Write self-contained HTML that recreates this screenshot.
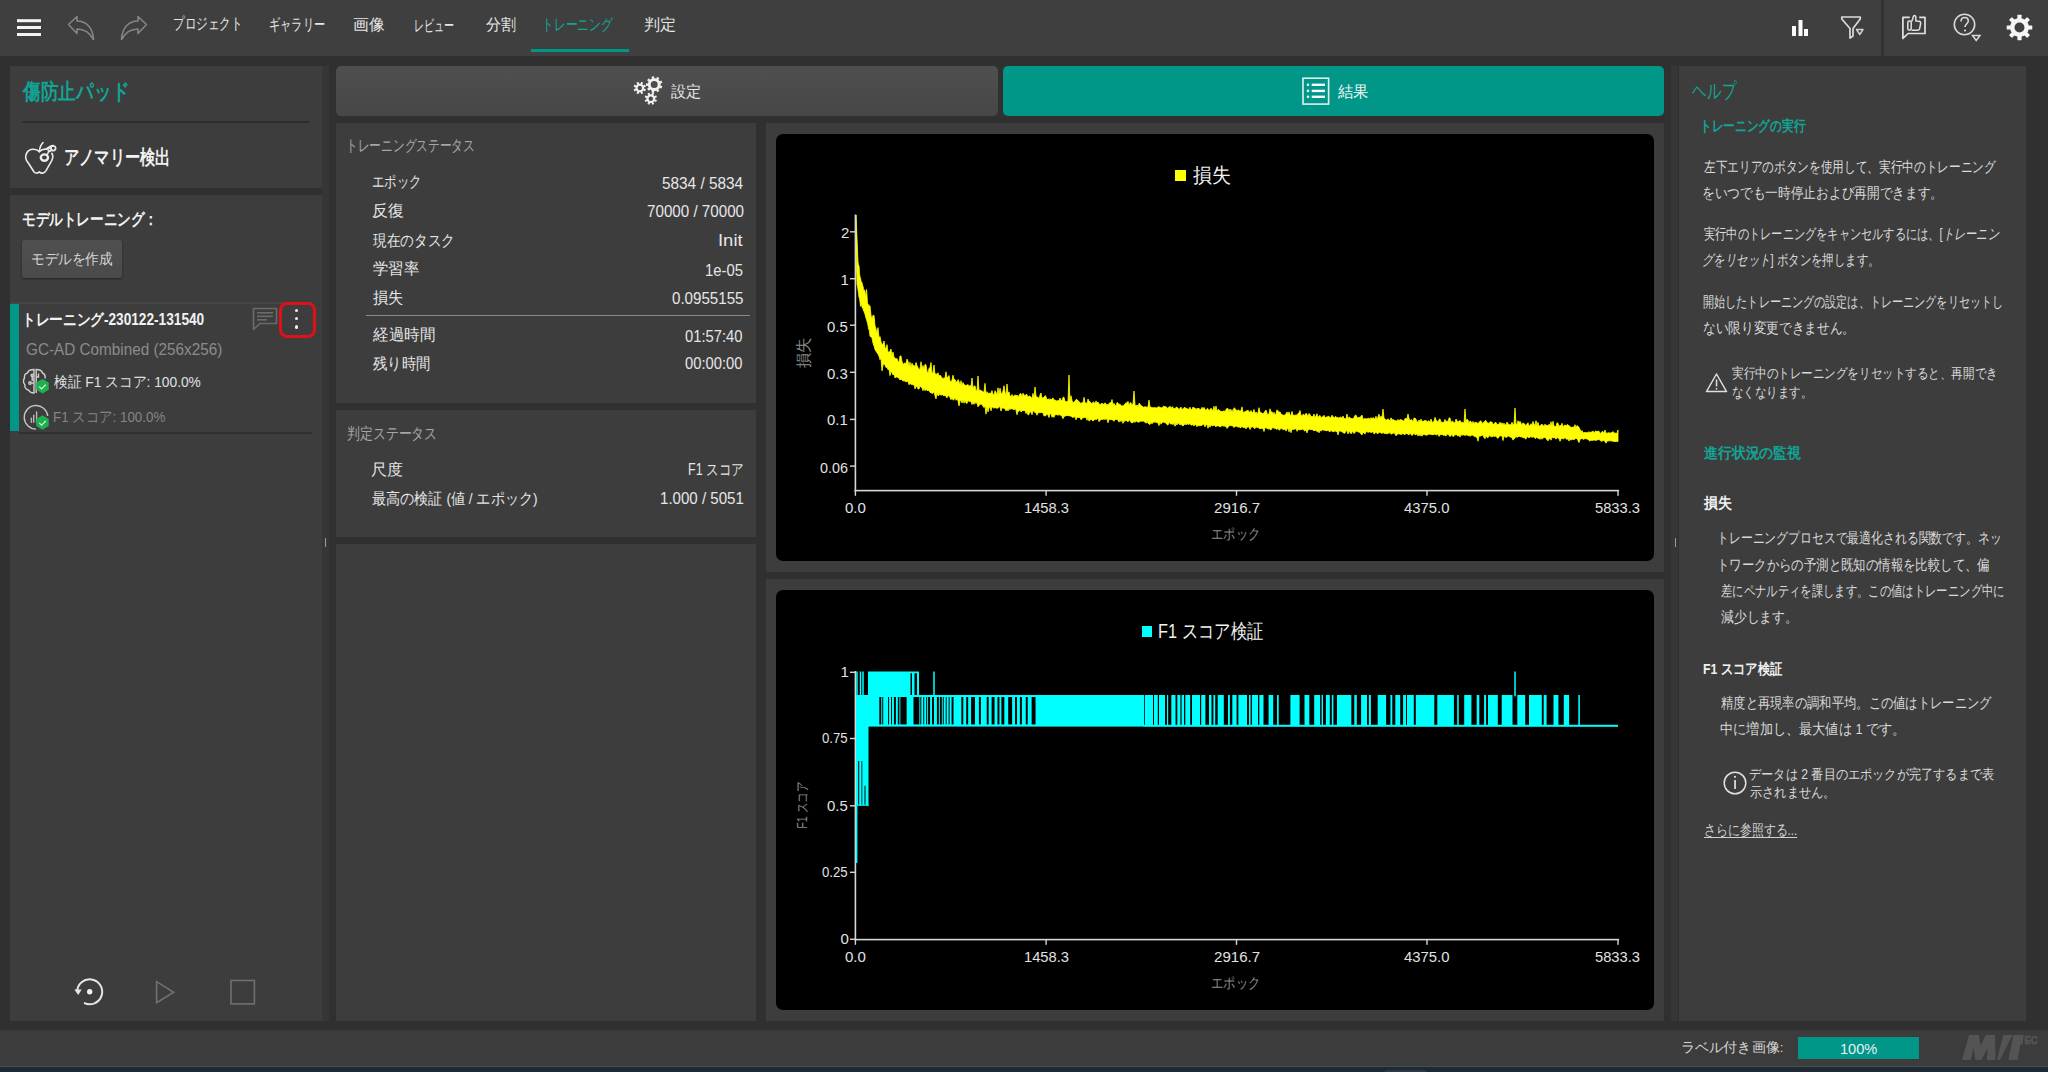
<!DOCTYPE html><html><head><meta charset="utf-8"><style>*{margin:0;padding:0}html,body{width:2048px;height:1072px;overflow:hidden}
body{background:#303030;font-family:"Liberation Sans",sans-serif;position:relative}
.tx{position:absolute;white-space:nowrap;transform-origin:0 50%}
</style></head><body>
<div style="position:absolute;left:0px;top:0px;width:2048px;height:56px;background:#3f3f3f;"></div>
<div style="position:absolute;left:1881px;top:0px;width:3px;height:56px;background:#313131;"></div>
<div style="position:absolute;left:322px;top:66px;width:7px;height:955px;background:#363636;"></div>
<div style="position:absolute;left:1670.8px;top:66px;width:7.7px;height:955px;background:#363636;"></div>
<div style="position:absolute;left:10px;top:66px;width:312px;height:122px;background:#3d3d3d;"></div>
<div style="position:absolute;left:22px;top:121px;width:287px;height:2px;background:#2e2e2e;"></div>
<div style="position:absolute;left:10px;top:195px;width:312px;height:826px;background:#3d3d3d;"></div>
<div style="position:absolute;left:22px;top:240px;width:100px;height:38px;background:linear-gradient(#505050,#4a4a4a);border-radius:3px;box-shadow:0 1px 2px rgba(0,0,0,0.45);"></div>
<div style="position:absolute;left:10px;top:301.5px;width:302px;height:2px;background:#464646;"></div>
<div style="position:absolute;left:10px;top:304px;width:9.2px;height:127px;background:#009688;"></div>
<div style="position:absolute;left:19px;top:431.5px;width:293px;height:2px;background:#2f2f2f;"></div>
<div style="position:absolute;left:278.5px;top:301.5px;width:37px;height:36.5px;background:transparent;border:3.6px solid #e0101a;border-radius:8px;box-sizing:border-box;"></div>
<div style="position:absolute;left:294.8px;top:308.7px;width:3.2px;height:3.2px;background:#f0f0f0;border-radius:50%;"></div>
<div style="position:absolute;left:294.8px;top:317.15px;width:3.2px;height:3.2px;background:#f0f0f0;border-radius:50%;"></div>
<div style="position:absolute;left:294.8px;top:325.4px;width:3.2px;height:3.2px;background:#f0f0f0;border-radius:50%;"></div>
<div style="position:absolute;left:336px;top:66px;width:662px;height:50px;background:linear-gradient(#4f4f4f,#474747);border-radius:5px;"></div>
<div style="position:absolute;left:1003px;top:66px;width:661px;height:50px;background:#009688;border-radius:5px;"></div>
<div style="position:absolute;left:336px;top:123px;width:420px;height:280px;background:#3d3d3d;"></div>
<div style="position:absolute;left:365.5px;top:314.5px;width:384px;height:1.3px;background:#8a8a8a;"></div>
<div style="position:absolute;left:336px;top:410px;width:420px;height:127px;background:#3d3d3d;"></div>
<div style="position:absolute;left:336px;top:544px;width:420px;height:477px;background:#3d3d3d;"></div>
<div style="position:absolute;left:766px;top:123px;width:898px;height:449px;background:#3d3d3d;"></div>
<div style="position:absolute;left:776.3px;top:134px;width:877.7px;height:427px;background:#000;border-radius:7px;"></div>
<div style="position:absolute;left:766px;top:579px;width:898px;height:442px;background:#3d3d3d;"></div>
<div style="position:absolute;left:776.3px;top:590px;width:877.7px;height:420px;background:#000;border-radius:7px;"></div>
<div style="position:absolute;left:1678.5px;top:66px;width:347.5px;height:955px;background:#3d3d3d;"></div>
<div style="position:absolute;left:324.5px;top:538px;width:1.5px;height:9px;background:#9a9a9a;"></div>
<div style="position:absolute;left:1674.5px;top:538px;width:1.5px;height:9px;background:#9a9a9a;"></div>
<div style="position:absolute;left:0px;top:1030px;width:2048px;height:36px;background:#3c3c3c;"></div>
<div style="position:absolute;left:0px;top:1066px;width:2048px;height:6px;background:#1f2933;"></div>
<div style="position:absolute;left:0px;top:1065.6px;width:2048px;height:1.2px;background:#454d55;"></div>
<div style="position:absolute;left:1384px;top:1070.3px;width:43px;height:6px;background:#2f3741;border-radius:3px;"></div>
<div style="position:absolute;left:1798.3px;top:1037.3px;width:120.3px;height:21.8px;background:#009688;"></div>
<div style="position:absolute;left:531px;top:48.5px;width:98px;height:3px;background:#009688;"></div>
<div style="position:absolute;left:1174.6px;top:170px;width:11.2px;height:11.2px;background:#ffff00;"></div>
<div style="position:absolute;left:1141.8px;top:626px;width:10.5px;height:10.5px;background:#00ffff;"></div>
<svg style="position:absolute;left:16px;top:18px" width="26" height="20" viewBox="0 0 26 20"><rect x="1" y="1.2" width="24" height="3" fill="#f4f4f4"/><rect x="1" y="8" width="24" height="3" fill="#f4f4f4"/><rect x="1" y="15" width="24" height="3" fill="#f4f4f4"/></svg>
<svg style="position:absolute;left:67px;top:15px" width="29" height="27" viewBox="0 0 29 27"><path d="M1.5,9.5 L10,1.5 L10,6 C19,6 26,12.5 26.5,24.5 C23,18 18,14 10,14 L10,18.5 Z" fill="none" stroke="#858585" stroke-width="1.6" stroke-linejoin="round"/></svg>
<svg style="position:absolute;left:119.5px;top:15px" width="29" height="27" viewBox="0 0 29 27"><g transform="translate(28,0) scale(-1,1)"><path d="M1.5,9.5 L10,1.5 L10,6 C19,6 26,12.5 26.5,24.5 C23,18 18,14 10,14 L10,18.5 Z" fill="none" stroke="#858585" stroke-width="1.6" stroke-linejoin="round"/></g></svg>
<svg style="position:absolute;left:1790px;top:18px" width="20" height="20" viewBox="0 0 20 20"><rect x="2" y="8" width="4" height="10" fill="#fafafa"/><rect x="8.5" y="2" width="4" height="16" fill="#fafafa"/><rect x="14" y="11" width="4" height="7" fill="#fafafa"/></svg>
<svg style="position:absolute;left:1839px;top:14px" width="27" height="27" viewBox="0 0 27 27"><path d="M2.8,3 L21.2,3 L21.2,5 L14,14.5 L14,22 L11,24 L11,14.5 L2.8,5 Z" fill="none" stroke="#dcdcdc" stroke-width="1.7" stroke-linejoin="round"/><path d="M17.5,15.5 L24,15.5 L20.8,20.5 Z" fill="none" stroke="#d0d0d0" stroke-width="1.5" stroke-linejoin="round"/></svg>
<svg style="position:absolute;left:1895px;top:8px" width="40" height="37" viewBox="0 0 40 37"><path d="M14.8,9.3 L7.9,9.3 L7.9,30.4 L13.1,25.5 L30,25.5 L30,9.3 L24.2,9.3" fill="none" stroke="#e2e2e2" stroke-width="1.7" stroke-linejoin="round"/><rect x="12.8" y="13.1" width="3.4" height="9" rx="1.5" fill="none" stroke="#e2e2e2" stroke-width="1.5"/><path d="M16.5,13.5 C17.5,12.5 18,10.5 18.3,8.5 C18.8,7 20.3,7 20.7,8.5 C21,10.5 20.8,12 20.8,13 L24.5,13.3 C26,13.8 25.8,15 25.5,16.5 L24.5,21 C24.2,22 23.5,22.2 22.5,22.2 L16.5,22.2" fill="none" stroke="#e2e2e2" stroke-width="1.5" stroke-linejoin="round"/></svg>
<svg style="position:absolute;left:1952px;top:12px" width="30" height="31" viewBox="0 0 30 31"><circle cx="12.5" cy="12.5" r="10.2" fill="none" stroke="#d8d8d8" stroke-width="1.6"/><path d="M9,9.5 C9,6.5 11,5.5 12.7,5.5 C14.8,5.5 16.3,7 16.3,9 C16.3,11.5 13,12 13,15" fill="none" stroke="#d8d8d8" stroke-width="1.6"/><circle cx="13" cy="18.5" r="1.1" fill="#d8d8d8"/><path d="M20.5,23.5 L28,23.5 L24.2,28.5 Z" fill="none" stroke="#d8d8d8" stroke-width="1.5"/></svg>
<svg style="position:absolute;left:2004px;top:11.6px" width="31" height="31" viewBox="0 0 31 31"><circle cx="15.5" cy="15.5" r="7.2" fill="none" stroke="#f6f6f6" stroke-width="4.4"/><rect x="13.4" y="2.7" width="4.2" height="6" rx="0.6" fill="#f6f6f6" transform="rotate(0 15.5 15.5)"/><rect x="13.4" y="2.7" width="4.2" height="6" rx="0.6" fill="#f6f6f6" transform="rotate(45 15.5 15.5)"/><rect x="13.4" y="2.7" width="4.2" height="6" rx="0.6" fill="#f6f6f6" transform="rotate(90 15.5 15.5)"/><rect x="13.4" y="2.7" width="4.2" height="6" rx="0.6" fill="#f6f6f6" transform="rotate(135 15.5 15.5)"/><rect x="13.4" y="2.7" width="4.2" height="6" rx="0.6" fill="#f6f6f6" transform="rotate(180 15.5 15.5)"/><rect x="13.4" y="2.7" width="4.2" height="6" rx="0.6" fill="#f6f6f6" transform="rotate(225 15.5 15.5)"/><rect x="13.4" y="2.7" width="4.2" height="6" rx="0.6" fill="#f6f6f6" transform="rotate(270 15.5 15.5)"/><rect x="13.4" y="2.7" width="4.2" height="6" rx="0.6" fill="#f6f6f6" transform="rotate(315 15.5 15.5)"/></svg>
<svg style="position:absolute;left:630px;top:74px" width="36" height="36" viewBox="0 0 36 36"><path d="M30.60,10.60 L30.52,11.60 L32.35,12.18 L31.46,14.62 L29.69,13.90 L29.10,14.71 L28.40,15.43 L29.42,17.05 L27.17,18.35 L26.28,16.65 L25.31,16.90 L24.31,17.00 L24.06,18.90 L21.50,18.45 L21.91,16.57 L21.00,16.14 L20.17,15.57 L18.75,16.86 L17.09,14.87 L18.60,13.70 L18.19,12.79 L17.92,11.82 L16.00,11.90 L16.00,9.30 L17.92,9.38 L18.19,8.41 L18.60,7.50 L17.09,6.33 L18.75,4.34 L20.17,5.63 L21.00,5.06 L21.91,4.63 L21.50,2.75 L24.06,2.30 L24.31,4.20 L25.31,4.30 L26.28,4.55 L27.17,2.85 L29.42,4.15 L28.40,5.77 L29.10,6.49 L29.69,7.30 L31.46,6.58 L32.35,9.02 L30.52,9.60 Z M20.70,10.60 a3.50,3.50 0 1,0 7.00,0 a3.50,3.50 0 1,0 -7.00,0 Z" fill="#f0f0f0" fill-rule="evenodd"/><path d="M14.20,14.00 L14.13,14.77 L15.95,15.35 L15.11,17.40 L13.41,16.52 L12.91,17.11 L12.32,17.61 L13.20,19.31 L11.15,20.15 L10.57,18.33 L9.80,18.40 L9.03,18.33 L8.45,20.15 L6.40,19.31 L7.28,17.61 L6.69,17.11 L6.19,16.52 L4.49,17.40 L3.65,15.35 L5.47,14.77 L5.40,14.00 L5.47,13.23 L3.65,12.65 L4.49,10.60 L6.19,11.48 L6.69,10.89 L7.28,10.39 L6.40,8.69 L8.45,7.85 L9.03,9.67 L9.80,9.60 L10.57,9.67 L11.15,7.85 L13.20,8.69 L12.32,10.39 L12.91,10.89 L13.41,11.48 L15.11,10.60 L15.95,12.65 L14.13,13.23 Z M7.60,14.00 a2.20,2.20 0 1,0 4.40,0 a2.20,2.20 0 1,0 -4.40,0 Z" fill="#f0f0f0" fill-rule="evenodd"/><path d="M25.20,24.70 L25.13,25.47 L26.95,26.05 L26.11,28.10 L24.41,27.22 L23.91,27.81 L23.32,28.31 L24.20,30.01 L22.15,30.85 L21.57,29.03 L20.80,29.10 L20.03,29.03 L19.45,30.85 L17.40,30.01 L18.28,28.31 L17.69,27.81 L17.19,27.22 L15.49,28.10 L14.65,26.05 L16.47,25.47 L16.40,24.70 L16.47,23.93 L14.65,23.35 L15.49,21.30 L17.19,22.18 L17.69,21.59 L18.28,21.09 L17.40,19.39 L19.45,18.55 L20.03,20.37 L20.80,20.30 L21.57,20.37 L22.15,18.55 L24.20,19.39 L23.32,21.09 L23.91,21.59 L24.41,22.18 L26.11,21.30 L26.95,23.35 L25.13,23.93 Z M18.60,24.70 a2.20,2.20 0 1,0 4.40,0 a2.20,2.20 0 1,0 -4.40,0 Z" fill="#f0f0f0" fill-rule="evenodd"/></svg>
<svg style="position:absolute;left:1300px;top:75px" width="31" height="31" viewBox="0 0 31 31"><rect x="3" y="3.2" width="25.6" height="25.9" fill="none" stroke="#e2efed" stroke-width="1.6"/><circle cx="8" cy="9.8" r="1.3" fill="#f4fafa"/><circle cx="8" cy="15.9" r="1.3" fill="#f4fafa"/><circle cx="8" cy="21.8" r="1.3" fill="#f4fafa"/><rect x="11.7" y="8.6" width="13.3" height="2.4" fill="#f4fafa"/><rect x="11.7" y="14.7" width="13.3" height="2.4" fill="#f4fafa"/><rect x="11.7" y="20.6" width="13.3" height="2.4" fill="#f4fafa"/></svg>
<svg style="position:absolute;left:22px;top:139px" width="38" height="38" viewBox="0 0 38 38"><g fill="none" stroke="#ececec" stroke-linecap="round" stroke-linejoin="round"><path d="M17.3,12.6 C15,10 8,8.5 5,13.5 C3,17 3.5,21 6.3,24 L11.6,32.3 C12.8,34.3 15.5,34.8 17.3,32.9 C19,34.8 22.3,34.5 23.9,31.9 L29.7,21.6 C31,19 31.3,16.5 29.8,14.3" stroke-width="1.6"/><path d="M17.3,12.6 C19,11 21.5,10 24,10.2" stroke-width="1.6"/><path d="M17.3,12.4 C17.8,8.5 19,5.5 21,3.6" stroke-width="1.5"/><ellipse cx="22.4" cy="18.6" rx="3.6" ry="3.2" stroke-width="2.4"/><path d="M25,16 L27.3,11.5 M24,10.2 C26,8.5 28.5,6.5 31.5,6.6" stroke-width="1.6"/><circle cx="31.3" cy="9.3" r="2.3" stroke-width="1.7"/><circle cx="27.6" cy="10.8" r="1.7" stroke-width="1.5"/></g></svg>
<svg style="position:absolute;left:252px;top:307px" width="27" height="25" viewBox="0 0 27 25"><path d="M1.5,1.5 L24.5,1.5 L24.5,16.5 L8,16.5 L1.5,22.5 Z" fill="none" stroke="#6b6b6b" stroke-width="1.6" stroke-linejoin="round"/><rect x="5" y="5" width="16" height="1.6" fill="#6b6b6b"/><rect x="5" y="8.5" width="16" height="1.6" fill="#6b6b6b"/><rect x="5" y="12" width="10" height="1.6" fill="#6b6b6b"/></svg>
<svg style="position:absolute;left:22px;top:368px" width="30" height="28" viewBox="0 0 30 28"><g fill="none" stroke="#cfcfcf" stroke-width="1.4"><path d="M12,1.5 C8,1.5 6,3 5.5,5 C3,5.5 2,8 2.5,10 C1,12 1.2,15 2.8,16.5 C2.5,19 4,21.5 6.5,22 C7.5,24 10,25 12,25 Z"/><path d="M14.2,25 L14.2,1.5 C18,1.5 20,3 20.5,5 C22.5,5.8 23.5,8 23,10.5"/><path d="M10.2,8.6 L10.2,12 L12,12 M9.2,15 L12,15"/><circle cx="10.2" cy="7.4" r="1.1"/><circle cx="8" cy="15" r="1.2"/><path d="M14.2,9 L16.5,9 L16.5,5.5"/></g><path d="M26.74,21.80 L20.50,25.40 L14.26,21.80 L14.26,14.60 L20.50,11.00 L26.74,14.60 Z" fill="#1db04f"/><path d="M17.2,18.6 L19.6,20.9 L23.8,16.6" fill="none" stroke="#d6f3dc" stroke-width="1.3"/></svg>
<svg style="position:absolute;left:22px;top:404px" width="30" height="28" viewBox="0 0 30 28"><path d="M14,25.1 A11.8,11.8 0 1,1 25.75,12" fill="none" stroke="#c4c4c4" stroke-width="1.4"/><rect x="8.7" y="13.6" width="1.4" height="5.2" fill="#b8b8b8"/><rect x="11" y="10.8" width="1.4" height="8" fill="#b8b8b8"/><rect x="13.9" y="7.4" width="1.4" height="11.4" fill="#b8b8b8"/><path d="M26.74,22.10 L20.50,25.70 L14.26,22.10 L14.26,14.90 L20.50,11.30 L26.74,14.90 Z" fill="#1db04f"/><path d="M17.2,18.9 L19.6,21.2 L23.8,16.9" fill="none" stroke="#d6f3dc" stroke-width="1.3"/></svg>
<svg style="position:absolute;left:72px;top:975px" width="36" height="34" viewBox="0 0 36 34"><path d="M12.03,27.94 A12.5,12.5 0 1,0 5.2,16.8" fill="none" stroke="#e6e6e6" stroke-width="2"/><path d="M2.3,14.4 L9.7,14.4 L6.2,19.9 Z" fill="#e6e6e6"/><circle cx="17.7" cy="16.8" r="2.7" fill="#f0f0f0"/></svg>
<svg style="position:absolute;left:153px;top:978px" width="26" height="28" viewBox="0 0 26 28"><path d="M3.6,3.6 L20.6,14.2 L3.6,24.8 Z" fill="none" stroke="#707070" stroke-width="1.6" stroke-linejoin="miter"/></svg>
<svg style="position:absolute;left:228px;top:977px" width="29" height="29" viewBox="0 0 29 29"><rect x="3" y="3.5" width="23.4" height="23.4" fill="none" stroke="#707070" stroke-width="1.6"/></svg>
<svg style="position:absolute;left:1705px;top:372px" width="25" height="22" viewBox="0 0 25 22"><path d="M11.5,2 L21.5,19.5 L1.5,19.5 Z" fill="none" stroke="#e0e0e0" stroke-width="1.5" stroke-linejoin="round"/><rect x="10.8" y="7.5" width="1.5" height="7" fill="#e0e0e0"/><circle cx="11.5" cy="16.8" r="0.9" fill="#e0e0e0"/></svg>
<svg style="position:absolute;left:1722px;top:769px" width="27" height="28" viewBox="0 0 27 28"><circle cx="13" cy="14" r="10.8" fill="none" stroke="#e0e0e0" stroke-width="1.5"/><rect x="12.2" y="11" width="1.7" height="9" fill="#e0e0e0"/><circle cx="13" cy="7.8" r="1.1" fill="#e0e0e0"/></svg>
<svg style="position:absolute;left:1960px;top:1033px" width="82" height="30" viewBox="0 0 82 30"><path d="M2.03,26.9 L9.06,2.05 L18.9,2.05 L20.5,12.8 L25.76,2.05 L35,2.05 L35.4,26.9 L26.85,26.9 L27.7,15.2 L21.4,26.9 L15.4,26.9 L13.45,14.6 L10.8,26.9 Z" fill="#545454"/><path d="M37,26.9 L43.3,2.05 L52.6,2.05 L39.8,26.9 Z" fill="#545454"/><path d="M53.4,2.05 L63.6,2.05 L62.6,11.5 L60.5,11.5 L57.4,26.9 L48.2,26.9 Z" fill="#545454"/><text x="64.6" y="10.6" font-family="Liberation Sans" font-weight="700" font-size="11" fill="#545454" stroke="#545454" stroke-width="0.7" transform="translate(64.6,0) scale(0.85,1) translate(-64.6,0)">EC</text></svg>
<svg style="position:absolute;left:0;top:0" width="2048" height="1072"><path d="M856.0,215.0 L856.5,226.5 L857.0,238.0 L857.5,250.0 L858.0,262.0 L858.5,265.5 L859.0,265.6 L859.5,273.2 L860.0,277.0 L860.5,277.8 L861.0,281.0 L861.5,282.4 L862.0,282.4 L862.5,285.2 L863.0,286.1 L863.5,289.3 L864.0,290.8 L864.5,289.8 L865.0,291.6 L865.5,295.0 L866.0,296.1 L866.5,289.5 L867.0,295.6 L867.5,302.9 L868.0,304.2 L868.5,306.7 L869.0,304.7 L869.5,308.6 L870.0,306.0 L871.0,315.2 L872.0,319.0 L873.0,315.3 L874.0,315.3 L875.0,325.5 L876.0,328.8 L877.0,333.5 L878.0,327.6 L879.0,337.5 L880.0,336.5 L881.0,341.7 L882.0,344.4 L883.0,344.4 L884.0,341.0 L885.0,347.2 L886.0,349.1 L887.0,344.6 L888.0,351.9 L889.0,352.3 L890.0,351.2 L891.0,349.0 L892.0,355.7 L893.0,352.0 L894.0,357.6 L895.0,357.9 L896.0,359.3 L897.0,358.4 L898.0,361.2 L899.0,362.4 L900.0,356.0 L901.0,355.9 L902.0,361.6 L903.0,364.5 L904.0,363.3 L905.0,363.2 L906.0,363.4 L907.0,359.1 L908.0,361.1 L909.0,366.5 L910.0,362.2 L911.0,367.8 L912.0,363.2 L913.0,365.7 L914.0,365.1 L915.0,367.2 L916.0,362.5 L917.0,365.6 L918.0,367.6 L919.0,369.7 L920.0,368.8 L921.0,361.7 L922.0,368.2 L923.0,365.5 L924.0,369.6 L925.0,364.3 L926.0,364.9 L927.0,371.2 L928.0,373.7 L929.0,368.3 L930.0,367.8 L931.0,362.5 L932.0,373.1 L933.0,372.9 L934.0,365.0 L935.0,374.5 L936.0,373.4 L937.0,375.0 L938.0,372.7 L939.0,376.1 L940.0,375.1 L941.0,376.3 L942.0,377.9 L943.0,378.4 L944.0,378.2 L945.0,378.0 L946.0,371.8 L947.0,377.9 L948.0,377.2 L949.0,375.5 L950.0,380.8 L951.0,381.9 L952.0,380.1 L953.0,375.2 L954.0,379.4 L955.0,379.6 L956.0,381.8 L957.0,382.2 L958.0,379.6 L959.0,381.4 L960.0,385.1 L961.0,380.7 L962.0,385.3 L963.0,382.5 L964.0,384.4 L965.0,385.3 L966.0,385.4 L967.0,385.3 L968.0,384.4 L969.0,386.7 L970.0,385.2 L971.0,386.6 L972.0,378.0 L973.0,388.1 L974.0,386.3 L975.0,385.8 L976.0,390.2 L977.0,391.1 L978.0,376.0 L979.0,391.1 L980.0,389.7 L981.0,391.2 L982.0,390.7 L983.0,392.2 L984.0,391.9 L985.0,383.3 L986.0,394.0 L987.0,391.7 L988.0,393.7 L989.0,393.1 L990.0,393.3 L991.0,393.3 L992.0,390.6 L993.0,394.6 L994.0,394.9 L995.0,390.7 L996.0,392.4 L997.0,394.7 L998.0,387.8 L999.0,394.6 L1000.0,388.2 L1001.0,392.7 L1002.0,394.3 L1003.0,391.0 L1004.0,385.7 L1005.0,392.0 L1006.0,396.0 L1007.0,384.0 L1008.0,393.2 L1009.0,391.9 L1010.0,396.3 L1011.0,396.4 L1012.0,394.5 L1013.0,396.7 L1014.0,396.0 L1015.0,394.8 L1016.0,396.1 L1017.0,395.0 L1018.0,396.7 L1019.0,395.5 L1020.0,393.7 L1021.0,393.7 L1022.0,396.7 L1023.0,393.2 L1024.0,394.7 L1025.0,396.4 L1026.0,394.4 L1027.0,394.7 L1028.0,397.2 L1029.0,396.1 L1030.0,396.3 L1031.0,397.2 L1032.0,398.3 L1033.0,393.4 L1034.0,398.2 L1035.0,387.0 L1036.0,395.7 L1037.0,397.5 L1038.0,397.1 L1039.0,399.1 L1040.0,395.1 L1041.0,393.0 L1042.0,398.5 L1043.0,397.6 L1044.0,397.5 L1045.0,395.6 L1046.0,396.4 L1047.0,400.1 L1048.0,398.8 L1049.0,399.7 L1050.0,398.7 L1051.0,400.1 L1052.0,398.7 L1053.0,398.0 L1054.0,400.1 L1055.0,400.0 L1056.0,400.7 L1057.0,401.1 L1058.0,400.6 L1059.0,400.7 L1060.0,398.0 L1061.0,400.2 L1062.0,400.7 L1063.0,397.4 L1064.0,397.2 L1065.0,401.1 L1066.0,401.9 L1067.0,401.5 L1068.0,401.2 L1069.0,375.0 L1070.0,401.2 L1071.0,395.7 L1072.0,400.4 L1073.0,402.5 L1074.0,402.3 L1075.0,401.0 L1076.0,399.6 L1077.0,399.5 L1078.0,400.6 L1079.0,401.6 L1080.0,403.1 L1081.0,403.2 L1082.0,402.7 L1083.0,402.9 L1084.0,397.3 L1085.0,403.1 L1086.0,402.8 L1087.0,403.5 L1088.0,399.0 L1089.0,401.2 L1090.0,401.8 L1091.0,402.7 L1092.0,404.1 L1093.0,401.8 L1094.0,402.7 L1095.0,403.2 L1096.0,400.9 L1097.0,403.2 L1098.0,402.0 L1099.0,403.5 L1100.0,404.7 L1101.0,403.7 L1102.0,403.3 L1103.0,404.0 L1104.0,404.4 L1105.0,402.8 L1106.0,404.1 L1107.0,404.7 L1108.0,404.8 L1109.0,403.6 L1110.0,402.4 L1111.0,403.1 L1112.0,399.5 L1113.0,404.7 L1114.0,403.3 L1115.0,405.5 L1116.0,405.7 L1117.0,402.6 L1118.0,403.0 L1119.0,404.6 L1120.0,404.0 L1121.0,405.8 L1122.0,405.9 L1123.0,406.0 L1124.0,404.9 L1125.0,404.2 L1126.0,402.6 L1127.0,403.5 L1128.0,401.3 L1129.0,405.6 L1130.0,402.9 L1131.0,402.7 L1132.0,405.2 L1133.0,403.8 L1134.0,391.0 L1135.0,404.5 L1136.0,406.3 L1137.0,404.9 L1138.0,406.7 L1139.0,403.3 L1140.0,404.1 L1141.0,406.0 L1142.0,405.8 L1143.0,407.3 L1144.0,407.1 L1145.0,406.8 L1146.0,406.9 L1147.0,407.2 L1148.0,407.1 L1149.0,400.1 L1150.0,407.5 L1151.0,406.8 L1152.0,407.9 L1153.0,407.5 L1154.0,408.1 L1155.0,407.3 L1156.0,408.2 L1157.0,407.7 L1158.0,407.3 L1159.0,406.4 L1160.0,407.6 L1161.0,407.7 L1162.0,408.0 L1163.0,406.7 L1164.0,405.9 L1165.0,407.2 L1166.0,406.5 L1167.0,408.5 L1168.0,407.8 L1169.0,407.4 L1170.0,406.1 L1171.0,409.2 L1172.0,406.7 L1173.0,407.4 L1174.0,408.8 L1175.0,408.5 L1176.0,407.3 L1177.0,407.2 L1178.0,408.3 L1179.0,409.6 L1180.0,408.2 L1181.0,407.1 L1182.0,409.3 L1183.0,409.2 L1184.0,407.6 L1185.0,407.5 L1186.0,408.4 L1187.0,408.6 L1188.0,409.3 L1189.0,409.2 L1190.0,407.2 L1191.0,409.7 L1192.0,409.5 L1193.0,407.0 L1194.0,408.2 L1195.0,407.9 L1196.0,409.8 L1197.0,408.3 L1198.0,408.8 L1199.0,408.2 L1200.0,410.1 L1201.0,409.2 L1202.0,407.3 L1203.0,408.8 L1204.0,407.4 L1205.0,409.3 L1206.0,410.6 L1207.0,408.7 L1208.0,408.7 L1209.0,411.1 L1210.0,409.5 L1211.0,408.2 L1212.0,409.4 L1213.0,410.8 L1214.0,406.3 L1215.0,411.0 L1216.0,406.0 L1217.0,411.3 L1218.0,409.6 L1219.0,409.7 L1220.0,411.2 L1221.0,411.1 L1222.0,412.0 L1223.0,411.2 L1224.0,410.9 L1225.0,411.5 L1226.0,409.4 L1227.0,408.5 L1228.0,408.6 L1229.0,411.8 L1230.0,409.0 L1231.0,411.9 L1232.0,409.6 L1233.0,412.6 L1234.0,407.8 L1235.0,408.4 L1236.0,409.7 L1237.0,411.5 L1238.0,409.8 L1239.0,410.4 L1240.0,411.3 L1241.0,410.6 L1242.0,406.9 L1243.0,412.5 L1244.0,412.1 L1245.0,412.0 L1246.0,410.7 L1247.0,411.3 L1248.0,410.0 L1249.0,412.3 L1250.0,412.0 L1251.0,410.5 L1252.0,412.6 L1253.0,412.6 L1254.0,409.4 L1255.0,413.8 L1256.0,411.9 L1257.0,413.7 L1258.0,412.4 L1259.0,407.7 L1260.0,412.0 L1261.0,412.9 L1262.0,412.9 L1263.0,414.1 L1264.0,412.4 L1265.0,411.5 L1266.0,410.0 L1267.0,413.1 L1268.0,414.7 L1269.0,413.9 L1270.0,408.8 L1271.0,412.4 L1272.0,411.6 L1273.0,414.4 L1274.0,412.3 L1275.0,415.1 L1276.0,413.6 L1277.0,409.8 L1278.0,410.9 L1279.0,412.6 L1280.0,411.7 L1281.0,413.8 L1282.0,414.8 L1283.0,415.0 L1284.0,415.5 L1285.0,414.8 L1286.0,414.0 L1287.0,411.9 L1288.0,414.3 L1289.0,411.9 L1290.0,414.6 L1291.0,415.8 L1292.0,411.4 L1293.0,415.3 L1294.0,415.2 L1295.0,415.5 L1296.0,414.7 L1297.0,415.4 L1298.0,413.5 L1299.0,413.1 L1300.0,410.5 L1301.0,415.5 L1302.0,415.9 L1303.0,414.3 L1304.0,414.5 L1305.0,415.5 L1306.0,413.1 L1307.0,414.5 L1308.0,416.8 L1309.0,413.4 L1310.0,414.4 L1311.0,416.9 L1312.0,416.2 L1313.0,417.1 L1314.0,414.0 L1315.0,417.4 L1316.0,415.8 L1317.0,413.7 L1318.0,417.4 L1319.0,416.1 L1320.0,415.4 L1321.0,417.7 L1322.0,417.0 L1323.0,416.7 L1324.0,415.3 L1325.0,417.5 L1326.0,417.3 L1327.0,417.0 L1328.0,416.5 L1329.0,416.2 L1330.0,418.0 L1331.0,417.5 L1332.0,415.2 L1333.0,416.4 L1334.0,417.9 L1335.0,416.8 L1336.0,416.6 L1337.0,417.7 L1338.0,417.4 L1339.0,418.3 L1340.0,416.9 L1341.0,417.7 L1342.0,417.9 L1343.0,416.0 L1344.0,418.8 L1345.0,418.4 L1346.0,419.0 L1347.0,414.0 L1348.0,418.4 L1349.0,417.2 L1350.0,417.4 L1351.0,418.5 L1352.0,418.8 L1353.0,418.8 L1354.0,417.4 L1355.0,415.4 L1356.0,415.1 L1357.0,417.2 L1358.0,418.2 L1359.0,416.9 L1360.0,418.3 L1361.0,416.0 L1362.0,415.1 L1363.0,419.4 L1364.0,418.8 L1365.0,418.6 L1366.0,419.0 L1367.0,418.7 L1368.0,418.6 L1369.0,418.1 L1370.0,420.1 L1371.0,417.6 L1372.0,418.7 L1373.0,417.6 L1374.0,418.4 L1375.0,419.2 L1376.0,416.3 L1377.0,420.0 L1378.0,416.9 L1379.0,414.2 L1380.0,418.4 L1381.0,416.1 L1382.0,417.6 L1383.0,409.0 L1384.0,418.2 L1385.0,419.1 L1386.0,419.9 L1387.0,420.1 L1388.0,418.7 L1389.0,420.0 L1390.0,420.9 L1391.0,417.8 L1392.0,419.5 L1393.0,420.0 L1394.0,419.7 L1395.0,420.8 L1396.0,420.8 L1397.0,421.1 L1398.0,419.5 L1399.0,421.0 L1400.0,419.6 L1401.0,420.0 L1402.0,419.8 L1403.0,420.9 L1404.0,421.0 L1405.0,418.5 L1406.0,418.5 L1407.0,419.0 L1408.0,414.0 L1409.0,418.3 L1410.0,421.1 L1411.0,419.5 L1412.0,420.1 L1413.0,421.7 L1414.0,418.0 L1415.0,418.1 L1416.0,419.2 L1417.0,421.9 L1418.0,421.9 L1419.0,420.0 L1420.0,421.8 L1421.0,419.2 L1422.0,421.2 L1423.0,421.6 L1424.0,420.6 L1425.0,420.9 L1426.0,420.2 L1427.0,422.2 L1428.0,421.3 L1429.0,420.7 L1430.0,422.3 L1431.0,419.1 L1432.0,422.0 L1433.0,422.3 L1434.0,421.2 L1435.0,417.3 L1436.0,419.9 L1437.0,420.9 L1438.0,422.5 L1439.0,419.5 L1440.0,418.9 L1441.0,422.5 L1442.0,421.8 L1443.0,422.8 L1444.0,422.1 L1445.0,419.4 L1446.0,421.7 L1447.0,420.7 L1448.0,422.4 L1449.0,418.0 L1450.0,417.8 L1451.0,422.7 L1452.0,421.2 L1453.0,421.4 L1454.0,422.7 L1455.0,423.1 L1456.0,419.1 L1457.0,420.7 L1458.0,422.2 L1459.0,421.3 L1460.0,420.3 L1461.0,422.8 L1462.0,421.8 L1463.0,422.9 L1464.0,422.8 L1465.0,409.0 L1466.0,422.4 L1467.0,419.1 L1468.0,420.1 L1469.0,423.8 L1470.0,420.9 L1471.0,421.5 L1472.0,423.9 L1473.0,421.4 L1474.0,423.5 L1475.0,422.3 L1476.0,422.5 L1477.0,422.6 L1478.0,423.8 L1479.0,422.2 L1480.0,421.6 L1481.0,420.7 L1482.0,423.4 L1483.0,422.9 L1484.0,421.9 L1485.0,421.0 L1486.0,420.5 L1487.0,423.3 L1488.0,422.5 L1489.0,424.0 L1490.0,421.7 L1491.0,422.1 L1492.0,422.1 L1493.0,424.2 L1494.0,424.6 L1495.0,422.6 L1496.0,422.4 L1497.0,424.5 L1498.0,424.3 L1499.0,424.3 L1500.0,422.2 L1501.0,424.5 L1502.0,422.8 L1503.0,425.0 L1504.0,423.1 L1505.0,424.9 L1506.0,424.9 L1507.0,422.1 L1508.0,423.5 L1509.0,424.9 L1510.0,424.4 L1511.0,425.1 L1512.0,422.3 L1513.0,425.0 L1514.0,424.1 L1515.0,408.0 L1516.0,424.4 L1517.0,424.5 L1518.0,420.7 L1519.0,423.1 L1520.0,421.3 L1521.0,423.3 L1522.0,424.9 L1523.0,422.8 L1524.0,423.8 L1525.0,424.4 L1526.0,425.7 L1527.0,423.9 L1528.0,422.7 L1529.0,425.9 L1530.0,425.5 L1531.0,423.7 L1532.0,425.5 L1533.0,421.4 L1534.0,424.0 L1535.0,425.7 L1536.0,420.7 L1537.0,426.0 L1538.0,422.3 L1539.0,426.5 L1540.0,425.6 L1541.0,425.2 L1542.0,424.0 L1543.0,426.0 L1544.0,425.8 L1545.0,424.2 L1546.0,425.4 L1547.0,425.2 L1548.0,425.9 L1549.0,424.2 L1550.0,425.4 L1551.0,421.7 L1552.0,426.8 L1553.0,421.2 L1554.0,426.4 L1555.0,426.0 L1556.0,427.0 L1557.0,422.7 L1558.0,423.2 L1559.0,426.4 L1560.0,425.2 L1561.0,425.9 L1562.0,423.3 L1563.0,426.6 L1564.0,425.9 L1565.0,424.8 L1566.0,426.1 L1567.0,424.7 L1568.0,424.7 L1569.0,426.0 L1570.0,426.3 L1571.0,427.5 L1572.0,427.3 L1573.0,427.0 L1574.0,427.4 L1575.0,424.7 L1576.0,427.7 L1577.0,425.5 L1578.0,426.3 L1579.0,427.3 L1580.0,429.4 L1581.0,431.7 L1582.0,430.5 L1583.0,432.6 L1584.0,433.0 L1585.0,432.2 L1586.0,432.9 L1587.0,432.4 L1588.0,432.8 L1589.0,431.6 L1590.0,432.8 L1591.0,432.0 L1592.0,432.0 L1593.0,430.9 L1594.0,433.1 L1595.0,431.5 L1596.0,430.8 L1597.0,432.1 L1598.0,431.0 L1599.0,431.2 L1600.0,433.2 L1601.0,433.3 L1602.0,431.6 L1603.0,431.5 L1604.0,433.2 L1605.0,430.0 L1606.0,433.0 L1607.0,433.5 L1608.0,432.8 L1609.0,432.8 L1610.0,433.2 L1611.0,432.7 L1612.0,432.8 L1613.0,431.6 L1614.0,432.6 L1615.0,433.6 L1616.0,432.8 L1617.0,433.7 L1618.0,429.9 L1618.0,441.6 L1617.0,441.2 L1616.0,441.4 L1615.0,441.5 L1614.0,441.4 L1613.0,441.2 L1612.0,441.0 L1611.0,440.7 L1610.0,441.0 L1609.0,440.6 L1608.0,441.2 L1607.0,440.9 L1606.0,443.2 L1605.0,441.7 L1604.0,440.0 L1603.0,441.1 L1602.0,440.6 L1601.0,441.4 L1600.0,439.8 L1599.0,439.7 L1598.0,439.8 L1597.0,439.7 L1596.0,440.8 L1595.0,440.0 L1594.0,440.1 L1593.0,440.2 L1592.0,440.5 L1591.0,440.1 L1590.0,441.2 L1589.0,440.3 L1588.0,439.4 L1587.0,438.9 L1586.0,438.7 L1585.0,438.6 L1584.0,439.0 L1583.0,439.4 L1582.0,438.4 L1581.0,438.7 L1580.0,439.7 L1579.0,442.6 L1578.0,440.6 L1577.0,438.3 L1576.0,438.8 L1575.0,438.3 L1574.0,440.0 L1573.0,439.1 L1572.0,439.4 L1571.0,440.0 L1570.0,439.3 L1569.0,441.1 L1568.0,438.4 L1567.0,439.7 L1566.0,438.6 L1565.0,437.7 L1564.0,438.6 L1563.0,439.1 L1562.0,437.9 L1561.0,439.1 L1560.0,441.3 L1559.0,438.5 L1558.0,438.1 L1557.0,437.4 L1556.0,439.2 L1555.0,437.7 L1554.0,437.8 L1553.0,437.5 L1552.0,437.6 L1551.0,440.2 L1550.0,437.9 L1549.0,439.2 L1548.0,440.8 L1547.0,439.9 L1546.0,438.0 L1545.0,437.6 L1544.0,437.5 L1543.0,438.1 L1542.0,439.3 L1541.0,436.9 L1540.0,439.4 L1539.0,438.0 L1538.0,438.6 L1537.0,437.1 L1536.0,438.3 L1535.0,438.3 L1534.0,436.8 L1533.0,437.1 L1532.0,437.2 L1531.0,436.6 L1530.0,437.2 L1529.0,438.0 L1528.0,436.8 L1527.0,436.7 L1526.0,439.1 L1525.0,438.6 L1524.0,437.4 L1523.0,437.9 L1522.0,436.8 L1521.0,437.0 L1520.0,436.5 L1519.0,436.2 L1518.0,436.7 L1517.0,437.4 L1516.0,436.6 L1515.0,437.9 L1514.0,439.0 L1513.0,440.1 L1512.0,437.9 L1511.0,437.0 L1510.0,437.1 L1509.0,436.3 L1508.0,435.9 L1507.0,436.8 L1506.0,437.8 L1505.0,436.2 L1504.0,436.2 L1503.0,440.6 L1502.0,435.8 L1501.0,435.9 L1500.0,435.7 L1499.0,436.8 L1498.0,438.3 L1497.0,437.7 L1496.0,435.9 L1495.0,436.2 L1494.0,436.7 L1493.0,435.4 L1492.0,437.2 L1491.0,435.7 L1490.0,436.6 L1489.0,435.6 L1488.0,437.8 L1487.0,437.4 L1486.0,435.9 L1485.0,438.7 L1484.0,437.6 L1483.0,435.5 L1482.0,435.1 L1481.0,436.0 L1480.0,436.0 L1479.0,436.1 L1478.0,441.2 L1477.0,437.6 L1476.0,437.1 L1475.0,436.3 L1474.0,436.4 L1473.0,434.9 L1472.0,435.2 L1471.0,435.2 L1470.0,436.4 L1469.0,435.4 L1468.0,435.8 L1467.0,434.7 L1466.0,434.9 L1465.0,435.6 L1464.0,434.7 L1463.0,434.9 L1462.0,435.2 L1461.0,434.6 L1460.0,437.1 L1459.0,434.8 L1458.0,436.2 L1457.0,434.8 L1456.0,434.8 L1455.0,434.8 L1454.0,435.8 L1453.0,436.7 L1452.0,434.2 L1451.0,435.7 L1450.0,436.4 L1449.0,435.5 L1448.0,434.3 L1447.0,434.0 L1446.0,436.2 L1445.0,434.9 L1444.0,435.2 L1443.0,435.2 L1442.0,434.2 L1441.0,434.7 L1440.0,434.6 L1439.0,436.4 L1438.0,433.7 L1437.0,434.8 L1436.0,434.9 L1435.0,434.1 L1434.0,434.4 L1433.0,434.5 L1432.0,434.9 L1431.0,434.1 L1430.0,434.4 L1429.0,433.9 L1428.0,434.4 L1427.0,435.2 L1426.0,435.2 L1425.0,434.5 L1424.0,434.7 L1423.0,434.3 L1422.0,436.3 L1421.0,433.9 L1420.0,436.1 L1419.0,433.6 L1418.0,436.0 L1417.0,433.7 L1416.0,434.8 L1415.0,434.7 L1414.0,432.9 L1413.0,434.6 L1412.0,435.6 L1411.0,434.3 L1410.0,432.9 L1409.0,435.1 L1408.0,433.9 L1407.0,433.9 L1406.0,433.1 L1405.0,434.8 L1404.0,434.2 L1403.0,433.6 L1402.0,434.0 L1401.0,434.6 L1400.0,433.9 L1399.0,434.0 L1398.0,433.7 L1397.0,434.6 L1396.0,435.8 L1395.0,434.0 L1394.0,432.6 L1393.0,433.5 L1392.0,433.5 L1391.0,434.3 L1390.0,432.6 L1389.0,433.1 L1388.0,433.2 L1387.0,434.0 L1386.0,433.4 L1385.0,433.3 L1384.0,433.6 L1383.0,432.4 L1382.0,433.6 L1381.0,432.9 L1380.0,432.3 L1379.0,432.3 L1378.0,433.8 L1377.0,433.2 L1376.0,432.3 L1375.0,433.4 L1374.0,433.9 L1373.0,431.7 L1372.0,432.0 L1371.0,432.8 L1370.0,431.7 L1369.0,431.9 L1368.0,432.4 L1367.0,431.5 L1366.0,431.8 L1365.0,434.1 L1364.0,433.0 L1363.0,432.2 L1362.0,435.0 L1361.0,434.1 L1360.0,432.4 L1359.0,432.0 L1358.0,432.1 L1357.0,431.1 L1356.0,431.2 L1355.0,432.6 L1354.0,433.6 L1353.0,431.3 L1352.0,432.2 L1351.0,433.9 L1350.0,432.2 L1349.0,431.3 L1348.0,433.9 L1347.0,430.8 L1346.0,430.8 L1345.0,433.1 L1344.0,433.2 L1343.0,432.6 L1342.0,431.7 L1341.0,431.2 L1340.0,431.0 L1339.0,430.9 L1338.0,434.9 L1337.0,431.2 L1336.0,431.8 L1335.0,430.4 L1334.0,431.9 L1333.0,431.4 L1332.0,431.2 L1331.0,430.6 L1330.0,431.7 L1329.0,431.4 L1328.0,430.3 L1327.0,430.6 L1326.0,430.9 L1325.0,430.0 L1324.0,430.5 L1323.0,429.7 L1322.0,429.7 L1321.0,431.2 L1320.0,430.1 L1319.0,432.8 L1318.0,430.8 L1317.0,431.7 L1316.0,430.4 L1315.0,430.2 L1314.0,430.9 L1313.0,430.0 L1312.0,429.4 L1311.0,429.8 L1310.0,429.3 L1309.0,429.3 L1308.0,429.9 L1307.0,432.9 L1306.0,430.1 L1305.0,431.1 L1304.0,430.5 L1303.0,428.8 L1302.0,429.4 L1301.0,429.5 L1300.0,430.0 L1299.0,429.5 L1298.0,429.5 L1297.0,431.3 L1296.0,428.4 L1295.0,429.4 L1294.0,428.7 L1293.0,429.8 L1292.0,428.9 L1291.0,432.7 L1290.0,428.9 L1289.0,431.8 L1288.0,428.2 L1287.0,429.2 L1286.0,431.1 L1285.0,429.1 L1284.0,429.5 L1283.0,429.8 L1282.0,428.4 L1281.0,428.1 L1280.0,429.8 L1279.0,430.1 L1278.0,428.4 L1277.0,429.4 L1276.0,428.8 L1275.0,428.2 L1274.0,428.3 L1273.0,427.4 L1272.0,428.1 L1271.0,430.0 L1270.0,429.3 L1269.0,428.6 L1268.0,429.2 L1267.0,428.0 L1266.0,428.0 L1265.0,427.6 L1264.0,431.5 L1263.0,428.5 L1262.0,428.2 L1261.0,428.4 L1260.0,428.8 L1259.0,428.2 L1258.0,427.3 L1257.0,427.6 L1256.0,426.8 L1255.0,428.6 L1254.0,428.2 L1253.0,426.7 L1252.0,426.9 L1251.0,427.3 L1250.0,429.5 L1249.0,426.8 L1248.0,427.0 L1247.0,427.1 L1246.0,428.9 L1245.0,427.1 L1244.0,427.9 L1243.0,427.2 L1242.0,426.5 L1241.0,427.7 L1240.0,427.6 L1239.0,426.7 L1238.0,427.2 L1237.0,426.4 L1236.0,425.9 L1235.0,426.5 L1234.0,427.6 L1233.0,426.0 L1232.0,425.7 L1231.0,425.6 L1230.0,425.6 L1229.0,425.7 L1228.0,427.3 L1227.0,428.4 L1226.0,425.9 L1225.0,426.7 L1224.0,425.6 L1223.0,426.3 L1222.0,425.4 L1221.0,426.5 L1220.0,426.9 L1219.0,426.1 L1218.0,425.9 L1217.0,425.7 L1216.0,426.8 L1215.0,425.9 L1214.0,424.8 L1213.0,426.0 L1212.0,425.5 L1211.0,424.9 L1210.0,427.2 L1209.0,424.7 L1208.0,428.3 L1207.0,424.7 L1206.0,424.4 L1205.0,426.9 L1204.0,424.3 L1203.0,424.2 L1202.0,425.5 L1201.0,425.4 L1200.0,425.8 L1199.0,425.7 L1198.0,425.3 L1197.0,426.7 L1196.0,424.7 L1195.0,424.4 L1194.0,426.0 L1193.0,424.6 L1192.0,424.8 L1191.0,425.2 L1190.0,423.5 L1189.0,424.2 L1188.0,424.6 L1187.0,423.5 L1186.0,425.0 L1185.0,423.5 L1184.0,425.1 L1183.0,425.8 L1182.0,425.5 L1181.0,424.1 L1180.0,425.0 L1179.0,423.6 L1178.0,423.1 L1177.0,425.0 L1176.0,423.5 L1175.0,426.3 L1174.0,422.6 L1173.0,424.7 L1172.0,423.7 L1171.0,424.0 L1170.0,423.6 L1169.0,422.6 L1168.0,425.1 L1167.0,424.6 L1166.0,422.9 L1165.0,422.9 L1164.0,421.9 L1163.0,422.2 L1162.0,422.4 L1161.0,424.2 L1160.0,421.8 L1159.0,425.6 L1158.0,423.3 L1157.0,422.3 L1156.0,422.5 L1155.0,421.8 L1154.0,422.3 L1153.0,422.1 L1152.0,423.9 L1151.0,421.9 L1150.0,424.5 L1149.0,423.9 L1148.0,423.2 L1147.0,421.4 L1146.0,423.3 L1145.0,421.9 L1144.0,421.7 L1143.0,420.7 L1142.0,421.5 L1141.0,420.8 L1140.0,421.6 L1139.0,422.2 L1138.0,421.9 L1137.0,421.8 L1136.0,420.7 L1135.0,422.4 L1134.0,420.9 L1133.0,422.7 L1132.0,422.7 L1131.0,422.4 L1130.0,420.2 L1129.0,420.0 L1128.0,422.0 L1127.0,420.7 L1126.0,420.3 L1125.0,421.4 L1124.0,420.5 L1123.0,423.4 L1122.0,419.6 L1121.0,421.7 L1120.0,419.9 L1119.0,422.2 L1118.0,419.9 L1117.0,419.7 L1116.0,419.3 L1115.0,419.5 L1114.0,421.3 L1113.0,419.8 L1112.0,419.9 L1111.0,419.3 L1110.0,419.8 L1109.0,419.3 L1108.0,422.8 L1107.0,419.2 L1106.0,418.7 L1105.0,419.5 L1104.0,419.0 L1103.0,419.2 L1102.0,419.4 L1101.0,419.4 L1100.0,420.5 L1099.0,421.7 L1098.0,418.2 L1097.0,419.2 L1096.0,419.5 L1095.0,419.0 L1094.0,420.3 L1093.0,420.9 L1092.0,420.3 L1091.0,419.1 L1090.0,420.4 L1089.0,421.1 L1088.0,417.7 L1087.0,420.3 L1086.0,417.6 L1085.0,417.3 L1084.0,417.8 L1083.0,417.5 L1082.0,418.8 L1081.0,419.8 L1080.0,417.1 L1079.0,417.7 L1078.0,417.4 L1077.0,417.3 L1076.0,419.8 L1075.0,416.5 L1074.0,417.1 L1073.0,417.2 L1072.0,417.2 L1071.0,416.1 L1070.0,415.9 L1069.0,415.9 L1068.0,415.4 L1067.0,415.7 L1066.0,415.4 L1065.0,416.5 L1064.0,416.0 L1063.0,418.8 L1062.0,416.5 L1061.0,415.2 L1060.0,415.1 L1059.0,414.4 L1058.0,415.4 L1057.0,414.2 L1056.0,415.0 L1055.0,414.5 L1054.0,417.4 L1053.0,415.8 L1052.0,417.3 L1051.0,413.4 L1050.0,414.1 L1049.0,417.5 L1048.0,415.1 L1047.0,414.1 L1046.0,415.5 L1045.0,415.8 L1044.0,416.0 L1043.0,412.7 L1042.0,412.6 L1041.0,412.5 L1040.0,412.7 L1039.0,412.6 L1038.0,412.9 L1037.0,415.3 L1036.0,412.5 L1035.0,412.8 L1034.0,411.1 L1033.0,410.9 L1032.0,414.7 L1031.0,412.3 L1030.0,411.4 L1029.0,414.3 L1028.0,415.1 L1027.0,410.9 L1026.0,413.6 L1025.0,410.1 L1024.0,411.0 L1023.0,410.3 L1022.0,410.8 L1021.0,412.0 L1020.0,409.8 L1019.0,411.0 L1018.0,411.5 L1017.0,414.8 L1016.0,410.3 L1015.0,408.5 L1014.0,409.9 L1013.0,408.9 L1012.0,409.0 L1011.0,408.4 L1010.0,409.7 L1009.0,408.6 L1008.0,410.9 L1007.0,408.7 L1006.0,410.9 L1005.0,408.9 L1004.0,407.9 L1003.0,408.3 L1002.0,407.7 L1001.0,411.1 L1000.0,407.0 L999.0,406.4 L998.0,408.3 L997.0,408.1 L996.0,408.1 L995.0,407.4 L994.0,408.3 L993.0,407.5 L992.0,406.7 L991.0,410.8 L990.0,406.6 L989.0,408.1 L988.0,411.9 L987.0,406.8 L986.0,414.2 L985.0,405.7 L984.0,407.6 L983.0,406.3 L982.0,404.5 L981.0,403.9 L980.0,404.5 L979.0,405.4 L978.0,406.8 L977.0,402.6 L976.0,403.6 L975.0,402.0 L974.0,404.4 L973.0,401.9 L972.0,404.5 L971.0,401.6 L970.0,401.1 L969.0,401.6 L968.0,400.5 L967.0,403.5 L966.0,402.9 L965.0,400.2 L964.0,403.2 L963.0,399.5 L962.0,402.9 L961.0,400.2 L960.0,401.3 L959.0,405.9 L958.0,400.7 L957.0,399.2 L956.0,400.3 L955.0,397.5 L954.0,399.7 L953.0,400.1 L952.0,397.7 L951.0,399.7 L950.0,397.5 L949.0,395.7 L948.0,395.7 L947.0,397.9 L946.0,396.4 L945.0,394.9 L944.0,396.1 L943.0,394.9 L942.0,394.5 L941.0,395.5 L940.0,393.5 L939.0,395.2 L938.0,395.7 L937.0,393.0 L936.0,398.9 L935.0,395.8 L934.0,392.0 L933.0,393.2 L932.0,393.3 L931.0,392.7 L930.0,392.4 L929.0,390.4 L928.0,390.4 L927.0,390.5 L926.0,389.4 L925.0,390.7 L924.0,387.7 L923.0,390.7 L922.0,387.9 L921.0,386.9 L920.0,386.2 L919.0,389.1 L918.0,389.0 L917.0,386.6 L916.0,386.5 L915.0,388.9 L914.0,384.4 L913.0,385.1 L912.0,384.3 L911.0,384.4 L910.0,383.4 L909.0,384.8 L908.0,381.2 L907.0,381.4 L906.0,381.9 L905.0,381.2 L904.0,380.6 L903.0,381.1 L902.0,379.9 L901.0,379.0 L900.0,380.0 L899.0,378.5 L898.0,377.5 L897.0,377.1 L896.0,376.9 L895.0,378.0 L894.0,374.0 L893.0,375.0 L892.0,373.0 L891.0,371.0 L890.0,375.7 L889.0,368.9 L888.0,369.8 L887.0,367.1 L886.0,367.6 L885.0,365.2 L884.0,363.4 L883.0,365.0 L882.0,370.9 L881.0,358.3 L880.0,359.8 L879.0,356.1 L878.0,354.1 L877.0,352.8 L876.0,351.2 L875.0,349.4 L874.0,345.9 L873.0,343.1 L872.0,337.9 L871.0,336.7 L870.0,336.3 L869.5,331.7 L869.0,329.3 L868.5,329.0 L868.0,325.3 L867.5,323.3 L867.0,321.2 L866.5,319.8 L866.0,318.2 L865.5,316.5 L865.0,314.2 L864.5,313.2 L864.0,311.3 L863.5,311.0 L863.0,308.1 L862.5,308.2 L862.0,306.9 L861.5,305.3 L861.0,304.1 L860.5,306.3 L860.0,301.8 L859.5,298.5 L859.0,297.4 L858.5,293.3 L858.0,289.7 L857.5,286.8 L857.0,284.0 L856.5,268.0 L856.0,252.0 Z" fill="#ffff00" stroke="#ffff00" stroke-width="0.8" stroke-linejoin="bevel"/><rect x="854.6" y="214.5" width="1.6" height="276.8" fill="#d6d6d6"/><rect x="854.6" y="489.8" width="764.5" height="1.6" fill="#d6d6d6"/><rect x="854.7" y="490.3" width="1.4" height="5.5" fill="#d6d6d6"/><rect x="1045.4" y="490.3" width="1.4" height="5.5" fill="#d6d6d6"/><rect x="1235.8" y="490.3" width="1.4" height="5.5" fill="#d6d6d6"/><rect x="1426.3" y="490.3" width="1.4" height="5.5" fill="#d6d6d6"/><rect x="1617.3" y="490.3" width="1.4" height="5.5" fill="#d6d6d6"/><rect x="850" y="231.1" width="5" height="1.4" fill="#d6d6d6"/><rect x="850" y="278" width="5" height="1.4" fill="#d6d6d6"/><rect x="850" y="324.5" width="5" height="1.4" fill="#d6d6d6"/><rect x="850" y="371.6" width="5" height="1.4" fill="#d6d6d6"/><rect x="850" y="418.7" width="5" height="1.4" fill="#d6d6d6"/><rect x="850" y="465.4" width="5" height="1.4" fill="#d6d6d6"/><rect x="854.6" y="671" width="1.6" height="269.3" fill="#d6d6d6"/><rect x="854.6" y="938.8" width="764.5" height="1.6" fill="#d6d6d6"/><rect x="854.7" y="939.3" width="1.4" height="5.5" fill="#d6d6d6"/><rect x="1045.4" y="939.3" width="1.4" height="5.5" fill="#d6d6d6"/><rect x="1235.8" y="939.3" width="1.4" height="5.5" fill="#d6d6d6"/><rect x="1426.3" y="939.3" width="1.4" height="5.5" fill="#d6d6d6"/><rect x="1617.3" y="939.3" width="1.4" height="5.5" fill="#d6d6d6"/><rect x="850" y="671.6" width="5" height="1.4" fill="#d6d6d6"/><rect x="850" y="737.8" width="5" height="1.4" fill="#d6d6d6"/><rect x="850" y="805.1" width="5" height="1.4" fill="#d6d6d6"/><rect x="850" y="871.6" width="5" height="1.4" fill="#d6d6d6"/><rect x="850" y="938.6" width="5" height="1.4" fill="#d6d6d6"/><rect x="855.8" y="805.8" width="1.6" height="57.2" fill="#00ffff"/><rect x="856" y="695" width="13" height="110.8" fill="#00ffff"/><rect x="858.2" y="761" width="1" height="43.6" fill="#000"/><rect x="861.5" y="761" width="0.8" height="43.6" fill="#000"/><rect x="864.5" y="785.8" width="1" height="18.8" fill="#000"/><rect x="868.5" y="726.8" width="2" height="78.2" fill="#000"/><rect x="868" y="671.5" width="51" height="24.7" fill="#00ffff"/><rect x="910.5" y="673.3" width="1.5" height="21.7" fill="#000"/><rect x="914.5" y="673.3" width="2.5" height="21.7" fill="#000"/><rect x="856.25" y="671.5" width="1.5" height="24.7" fill="#00ffff"/><rect x="859.75" y="671.5" width="1.5" height="24.7" fill="#00ffff"/><rect x="862.25" y="671.5" width="1.5" height="24.7" fill="#00ffff"/><rect x="933.25" y="671.5" width="1.5" height="24.7" fill="#00ffff"/><rect x="1514.25" y="671.5" width="1.5" height="24.7" fill="#00ffff"/><rect x="869" y="695" width="274" height="31.6" fill="#00ffff"/><rect x="879.30" y="697" width="1.95" height="27.4" fill="#000"/><rect x="882.23" y="697" width="0.98" height="27.4" fill="#000"/><rect x="888.09" y="697" width="0.98" height="27.4" fill="#000"/><rect x="891.02" y="697" width="0.98" height="27.4" fill="#000"/><rect x="893.95" y="697" width="1.95" height="27.4" fill="#000"/><rect x="897.85" y="697" width="1.56" height="27.4" fill="#000"/><rect x="900.39" y="697" width="6.25" height="27.4" fill="#000"/><rect x="913.48" y="697" width="5.86" height="27.4" fill="#000"/><rect x="920.31" y="697" width="0.98" height="27.4" fill="#000"/><rect x="923.24" y="697" width="0.98" height="27.4" fill="#000"/><rect x="926.17" y="697" width="0.98" height="27.4" fill="#000"/><rect x="928.12" y="697" width="1.95" height="27.4" fill="#000"/><rect x="932.03" y="697" width="1.95" height="27.4" fill="#000"/><rect x="936.91" y="697" width="1.95" height="27.4" fill="#000"/><rect x="939.84" y="697" width="1.95" height="27.4" fill="#000"/><rect x="942.77" y="697" width="0.98" height="27.4" fill="#000"/><rect x="945.70" y="697" width="0.98" height="27.4" fill="#000"/><rect x="948.63" y="697" width="0.98" height="27.4" fill="#000"/><rect x="951.56" y="697" width="1.95" height="27.4" fill="#000"/><rect x="961.33" y="697" width="1.95" height="27.4" fill="#000"/><rect x="966.21" y="697" width="1.95" height="27.4" fill="#000"/><rect x="971.09" y="697" width="3.91" height="27.4" fill="#000"/><rect x="978.91" y="697" width="1.95" height="27.4" fill="#000"/><rect x="986.72" y="697" width="1.95" height="27.4" fill="#000"/><rect x="991.60" y="697" width="2.93" height="27.4" fill="#000"/><rect x="997.46" y="697" width="1.95" height="27.4" fill="#000"/><rect x="1001.37" y="697" width="2.93" height="27.4" fill="#000"/><rect x="1008.20" y="697" width="3.91" height="27.4" fill="#000"/><rect x="1015.04" y="697" width="1.95" height="27.4" fill="#000"/><rect x="1019.92" y="697" width="1.95" height="27.4" fill="#000"/><rect x="1025.78" y="697" width="1.95" height="27.4" fill="#000"/><rect x="1031.64" y="697" width="3.91" height="27.4" fill="#000"/><rect x="1143.00" y="695" width="1.20" height="30.6" fill="#00ffff"/><rect x="1145.00" y="695" width="8.00" height="30.6" fill="#00ffff"/><rect x="1154.00" y="695" width="3.80" height="30.6" fill="#00ffff"/><rect x="1159.00" y="695" width="6.00" height="30.6" fill="#00ffff"/><rect x="1167.00" y="695" width="1.20" height="30.6" fill="#00ffff"/><rect x="1171.30" y="695" width="4.20" height="30.6" fill="#00ffff"/><rect x="1177.30" y="695" width="3.10" height="30.6" fill="#00ffff"/><rect x="1181.60" y="695" width="2.40" height="30.6" fill="#00ffff"/><rect x="1185.30" y="695" width="4.90" height="30.6" fill="#00ffff"/><rect x="1192.00" y="695" width="8.00" height="30.6" fill="#00ffff"/><rect x="1201.20" y="695" width="4.20" height="30.6" fill="#00ffff"/><rect x="1209.00" y="695" width="2.50" height="30.6" fill="#00ffff"/><rect x="1213.40" y="695" width="1.80" height="30.6" fill="#00ffff"/><rect x="1217.70" y="695" width="6.10" height="30.6" fill="#00ffff"/><rect x="1228.00" y="695" width="1.90" height="30.6" fill="#00ffff"/><rect x="1232.30" y="695" width="4.30" height="30.6" fill="#00ffff"/><rect x="1238.40" y="695" width="8.60" height="30.6" fill="#00ffff"/><rect x="1249.00" y="695" width="1.60" height="30.6" fill="#00ffff"/><rect x="1251.90" y="695" width="6.10" height="30.6" fill="#00ffff"/><rect x="1259.30" y="695" width="4.20" height="30.6" fill="#00ffff"/><rect x="1268.60" y="695" width="4.60" height="30.6" fill="#00ffff"/><rect x="1277.00" y="695" width="1.70" height="30.6" fill="#00ffff"/><rect x="1290.40" y="695" width="9.20" height="30.6" fill="#00ffff"/><rect x="1304.50" y="695" width="4.80" height="30.6" fill="#00ffff"/><rect x="1314.20" y="695" width="5.90" height="30.6" fill="#00ffff"/><rect x="1321.60" y="695" width="1.40" height="30.6" fill="#00ffff"/><rect x="1325.90" y="695" width="3.90" height="30.6" fill="#00ffff"/><rect x="1331.80" y="695" width="1.60" height="30.6" fill="#00ffff"/><rect x="1337.00" y="695" width="14.30" height="30.6" fill="#00ffff"/><rect x="1354.30" y="695" width="2.50" height="30.6" fill="#00ffff"/><rect x="1361.10" y="695" width="5.90" height="30.6" fill="#00ffff"/><rect x="1368.90" y="695" width="2.00" height="30.6" fill="#00ffff"/><rect x="1377.70" y="695" width="8.40" height="30.6" fill="#00ffff"/><rect x="1390.40" y="695" width="1.90" height="30.6" fill="#00ffff"/><rect x="1395.30" y="695" width="4.90" height="30.6" fill="#00ffff"/><rect x="1403.10" y="695" width="2.90" height="30.6" fill="#00ffff"/><rect x="1407.00" y="695" width="6.80" height="30.6" fill="#00ffff"/><rect x="1415.80" y="695" width="18.50" height="30.6" fill="#00ffff"/><rect x="1437.30" y="695" width="16.60" height="30.6" fill="#00ffff"/><rect x="1457.20" y="695" width="1.55" height="30.6" fill="#00ffff"/><rect x="1464.20" y="695" width="7.20" height="30.6" fill="#00ffff"/><rect x="1476.70" y="695" width="2.60" height="30.6" fill="#00ffff"/><rect x="1484.10" y="695" width="2.00" height="30.6" fill="#00ffff"/><rect x="1488.00" y="695" width="9.80" height="30.6" fill="#00ffff"/><rect x="1501.70" y="695" width="10.80" height="30.6" fill="#00ffff"/><rect x="1517.30" y="695" width="7.90" height="30.6" fill="#00ffff"/><rect x="1529.00" y="695" width="12.80" height="30.6" fill="#00ffff"/><rect x="1543.70" y="695" width="2.90" height="30.6" fill="#00ffff"/><rect x="1553.50" y="695" width="4.90" height="30.6" fill="#00ffff"/><rect x="1563.80" y="695" width="5.30" height="30.6" fill="#00ffff"/><rect x="1578.30" y="695" width="1.60" height="30.6" fill="#00ffff"/><rect x="1143" y="724.8" width="475" height="2" fill="#00ffff"/></svg>
<div class="tx" id="t1" style="left:172.80px;top:16.45px;font-size:15.50px;line-height:15.50px;font-weight:400;color:#e6e6e6;transform:scaleX(0.7232);">プロジェクト</div>
<div class="tx" id="t2" style="left:268.60px;top:17.25px;font-size:15.50px;line-height:15.50px;font-weight:400;color:#e6e6e6;transform:scaleX(0.7013);">ギャラリー</div>
<div class="tx" id="t3" style="left:353.43px;top:16.65px;font-size:15.50px;line-height:15.50px;font-weight:400;color:#e6e6e6;transform:scaleX(0.9887);">画像</div>
<div class="tx" id="t4" style="left:414.27px;top:17.65px;font-size:15.50px;line-height:15.50px;font-weight:400;color:#e6e6e6;transform:scaleX(0.6246);">レビュー</div>
<div class="tx" id="t5" style="left:485.68px;top:17.15px;font-size:15.50px;line-height:15.50px;font-weight:400;color:#e6e6e6;transform:scaleX(0.9433);">分割</div>
<div class="tx" id="t6" style="left:541.57px;top:16.75px;font-size:15.50px;line-height:15.50px;font-weight:400;color:#10a596;transform:scaleX(0.7380);">トレーニング</div>
<div class="tx" id="t7" style="left:644.21px;top:17.15px;font-size:15.50px;line-height:15.50px;font-weight:400;color:#e6e6e6;transform:scaleX(1.0072);">判定</div>
<div class="tx" id="l1" style="left:22.55px;top:80.75px;font-size:22.00px;line-height:22.00px;font-weight:700;color:#10a596;transform:scaleX(0.7971);">傷防止パッド</div>
<div class="tx" id="l2" style="left:64.10px;top:148.25px;font-size:19.50px;line-height:19.50px;font-weight:700;color:#f2f2f2;transform:scaleX(0.7615);">アノマリー検出</div>
<div class="tx" id="l3" style="left:21.80px;top:210.70px;font-size:17.00px;line-height:17.00px;font-weight:700;color:#f2f2f2;transform:scaleX(0.8000);">モデルトレーニング：</div>
<div class="tx" id="l4" style="left:31.20px;top:250.55px;font-size:15.00px;line-height:15.00px;font-weight:400;color:#d6d6d6;transform:scaleX(0.9058);">モデルを作成</div>
<div class="tx" id="l5" style="left:22.44px;top:312.00px;font-size:16.00px;line-height:16.00px;font-weight:700;color:#f2f2f2;transform:scaleX(0.8535);">トレーニング-230122-131540</div>
<div class="tx" id="l6" style="left:25.81px;top:341.90px;font-size:16.00px;line-height:16.00px;font-weight:400;color:#8c8c8c;transform:scaleX(0.9557);">GC-AD Combined (256x256)</div>
<div class="tx" id="l7" style="left:53.67px;top:374.05px;font-size:15.00px;line-height:15.00px;font-weight:400;color:#e0e0e0;transform:scaleX(0.9175);">検証 F1 スコア: 100.0%</div>
<div class="tx" id="l8" style="left:52.77px;top:409.35px;font-size:15.00px;line-height:15.00px;font-weight:400;color:#858585;transform:scaleX(0.8928);">F1 スコア: 100.0%</div>
<div class="tx" id="c0a" style="left:670.67px;top:83.90px;font-size:16.00px;line-height:16.00px;font-weight:400;color:#e6e6e6;transform:scaleX(0.9511);">設定</div>
<div class="tx" id="c0b" style="left:1337.60px;top:83.90px;font-size:16.00px;line-height:16.00px;font-weight:400;color:#eef5f4;transform:scaleX(0.9558);">結果</div>
<div class="tx" id="c1" style="left:345.86px;top:137.85px;font-size:15.50px;line-height:15.50px;font-weight:400;color:#a6a6a6;transform:scaleX(0.7321);">トレーニングステータス</div>
<div class="tx" id="r0" style="left:371.72px;top:174.25px;font-size:15.50px;line-height:15.50px;font-weight:400;color:#e6e6e6;transform:scaleX(0.7742);">エポック</div>
<div class="tx" id="rv0" style="left:662.14px;top:175.85px;font-size:16.00px;line-height:16.00px;font-weight:400;color:#e6e6e6;transform:scaleX(0.9592);">5834 / 5834</div>
<div class="tx" id="r1" style="left:371.57px;top:203.15px;font-size:15.50px;line-height:15.50px;font-weight:400;color:#e6e6e6;transform:scaleX(0.9966);">反復</div>
<div class="tx" id="rv1" style="left:647.16px;top:204.15px;font-size:16.00px;line-height:16.00px;font-weight:400;color:#e6e6e6;transform:scaleX(0.9486);">70000 / 70000</div>
<div class="tx" id="r2" style="left:372.54px;top:233.05px;font-size:15.50px;line-height:15.50px;font-weight:400;color:#e6e6e6;transform:scaleX(0.8517);">現在のタスク</div>
<div class="tx" id="rv2" style="left:718.23px;top:232.80px;font-size:16.00px;line-height:16.00px;font-weight:400;color:#e6e6e6;transform:scaleX(1.1523);">Init</div>
<div class="tx" id="r3" style="left:372.62px;top:261.25px;font-size:15.50px;line-height:15.50px;font-weight:400;color:#e6e6e6;transform:scaleX(0.9662);">学習率</div>
<div class="tx" id="rv3" style="left:705.07px;top:262.70px;font-size:16.00px;line-height:16.00px;font-weight:400;color:#e6e6e6;transform:scaleX(0.9258);">1e-05</div>
<div class="tx" id="r4" style="left:372.59px;top:289.85px;font-size:15.50px;line-height:15.50px;font-weight:400;color:#e6e6e6;transform:scaleX(0.9624);">損失</div>
<div class="tx" id="rv4" style="left:672.05px;top:290.90px;font-size:16.00px;line-height:16.00px;font-weight:400;color:#e6e6e6;transform:scaleX(0.9459);">0.0955155</div>
<div class="tx" id="r5" style="left:372.59px;top:327.45px;font-size:15.50px;line-height:15.50px;font-weight:400;color:#e6e6e6;transform:scaleX(0.9754);">経過時間</div>
<div class="tx" id="rv5" style="left:685.45px;top:328.70px;font-size:16.00px;line-height:16.00px;font-weight:400;color:#e6e6e6;transform:scaleX(0.9216);">01:57:40</div>
<div class="tx" id="r6" style="left:372.55px;top:355.65px;font-size:15.50px;line-height:15.50px;font-weight:400;color:#e6e6e6;transform:scaleX(0.8962);">残り時間</div>
<div class="tx" id="rv6" style="left:685.45px;top:356.40px;font-size:16.00px;line-height:16.00px;font-weight:400;color:#e6e6e6;transform:scaleX(0.9216);">00:00:00</div>
<div class="tx" id="r7" style="left:370.81px;top:462.20px;font-size:15.50px;line-height:15.50px;font-weight:400;color:#e6e6e6;transform:scaleX(0.9939);">尺度</div>
<div class="tx" id="rv7" style="left:688.22px;top:461.95px;font-size:16.00px;line-height:16.00px;font-weight:400;color:#e6e6e6;transform:scaleX(0.7829);">F1 スコア</div>
<div class="tx" id="r8" style="left:371.78px;top:490.60px;font-size:15.50px;line-height:15.50px;font-weight:400;color:#e6e6e6;transform:scaleX(0.8824);">最高の検証 (値 / エポック)</div>
<div class="tx" id="rv8" style="left:660.06px;top:491.25px;font-size:16.00px;line-height:16.00px;font-weight:400;color:#e6e6e6;transform:scaleX(0.9425);">1.000 / 5051</div>
<div class="tx" id="c2" style="left:347.44px;top:425.70px;font-size:15.50px;line-height:15.50px;font-weight:400;color:#a6a6a6;transform:scaleX(0.8056);">判定ステータス</div>
<div class="tx" id="k1L" style="left:1193.00px;top:165.10px;font-size:20.00px;line-height:20.00px;font-weight:400;color:#f2f2f2;transform:scaleX(0.9551);">損失</div>
<div class="tx" id="k1y2" style="left:840.90px;top:225.40px;font-size:15.00px;line-height:15.00px;font-weight:400;color:#e2e2e2;transform:scaleX(1.0000);">2</div>
<div class="tx" id="k1y1" style="left:840.40px;top:272.30px;font-size:15.00px;line-height:15.00px;font-weight:400;color:#e2e2e2;transform:scaleX(1.0000);">1</div>
<div class="tx" id="k1y0.5" style="left:827.49px;top:318.90px;font-size:15.00px;line-height:15.00px;font-weight:400;color:#e2e2e2;transform:scaleX(0.9948);">0.5</div>
<div class="tx" id="k1y0.3" style="left:827.49px;top:365.80px;font-size:15.00px;line-height:15.00px;font-weight:400;color:#e2e2e2;transform:scaleX(0.9948);">0.3</div>
<div class="tx" id="k1y0.1" style="left:827.49px;top:411.70px;font-size:15.00px;line-height:15.00px;font-weight:400;color:#e2e2e2;transform:scaleX(0.9923);">0.1</div>
<div class="tx" id="k1y0.06" style="left:819.82px;top:459.90px;font-size:15.00px;line-height:15.00px;font-weight:400;color:#e2e2e2;transform:scaleX(0.9578);">0.06</div>
<div class="tx" id="k1x0.0" style="left:844.88px;top:500.40px;font-size:15.20px;line-height:15.20px;font-weight:400;color:#e2e2e2;transform:scaleX(0.9907);">0.0</div>
<div class="tx" id="k2x0.0" style="left:844.88px;top:949.40px;font-size:15.20px;line-height:15.20px;font-weight:400;color:#e2e2e2;transform:scaleX(0.9907);">0.0</div>
<div class="tx" id="k1x1458.3" style="left:1024.24px;top:500.40px;font-size:15.20px;line-height:15.20px;font-weight:400;color:#e2e2e2;transform:scaleX(0.9692);">1458.3</div>
<div class="tx" id="k2x1458.3" style="left:1024.24px;top:949.40px;font-size:15.20px;line-height:15.20px;font-weight:400;color:#e2e2e2;transform:scaleX(0.9692);">1458.3</div>
<div class="tx" id="k1x2916.7" style="left:1214.10px;top:500.40px;font-size:15.20px;line-height:15.20px;font-weight:400;color:#e2e2e2;transform:scaleX(0.9924);">2916.7</div>
<div class="tx" id="k2x2916.7" style="left:1214.10px;top:949.40px;font-size:15.20px;line-height:15.20px;font-weight:400;color:#e2e2e2;transform:scaleX(0.9924);">2916.7</div>
<div class="tx" id="k1x4375.0" style="left:1404.49px;top:500.40px;font-size:15.20px;line-height:15.20px;font-weight:400;color:#e2e2e2;transform:scaleX(0.9773);">4375.0</div>
<div class="tx" id="k2x4375.0" style="left:1404.49px;top:949.40px;font-size:15.20px;line-height:15.20px;font-weight:400;color:#e2e2e2;transform:scaleX(0.9773);">4375.0</div>
<div class="tx" id="k1x5833.3" style="left:1595.24px;top:500.40px;font-size:15.20px;line-height:15.20px;font-weight:400;color:#e2e2e2;transform:scaleX(0.9692);">5833.3</div>
<div class="tx" id="k2x5833.3" style="left:1595.24px;top:949.40px;font-size:15.20px;line-height:15.20px;font-weight:400;color:#e2e2e2;transform:scaleX(0.9692);">5833.3</div>
<div class="tx" id="k1T" style="left:1211.41px;top:526.45px;font-size:15.00px;line-height:15.00px;font-weight:400;color:#8e8e8e;transform:scaleX(0.8214);">エポック</div>
<div class="tx" id="k2T" style="left:1211.41px;top:975.45px;font-size:15.00px;line-height:15.00px;font-weight:400;color:#8e8e8e;transform:scaleX(0.8214);">エポック</div>
<div class="tx" id="k2L" style="left:1158.43px;top:621.20px;font-size:20.00px;line-height:20.00px;font-weight:400;color:#f2f2f2;transform:scaleX(0.8158);">F1 スコア検証</div>
<div class="tx" id="k2y1" style="left:840.40px;top:664.10px;font-size:15.00px;line-height:15.00px;font-weight:400;color:#e2e2e2;transform:scaleX(1.0000);">1</div>
<div class="tx" id="k2y0.75" style="left:821.52px;top:730.00px;font-size:15.00px;line-height:15.00px;font-weight:400;color:#e2e2e2;transform:scaleX(0.8789);">0.75</div>
<div class="tx" id="k2y0.5" style="left:827.49px;top:797.70px;font-size:15.00px;line-height:15.00px;font-weight:400;color:#e2e2e2;transform:scaleX(0.9948);">0.5</div>
<div class="tx" id="k2y0.25" style="left:821.52px;top:864.20px;font-size:15.00px;line-height:15.00px;font-weight:400;color:#e2e2e2;transform:scaleX(0.8789);">0.25</div>
<div class="tx" id="k2y0" style="left:840.50px;top:931.20px;font-size:15.00px;line-height:15.00px;font-weight:400;color:#e2e2e2;transform:scaleX(1.0000);">0</div>
<div class="tx" id="h1" style="left:1691.83px;top:80.40px;font-size:21.00px;line-height:21.00px;font-weight:400;color:#10a596;transform:scaleX(0.6879);">ヘルプ</div>
<div class="tx" id="h2" style="left:1699.71px;top:118.15px;font-size:15.00px;line-height:15.00px;font-weight:700;color:#10a596;transform:scaleX(0.7800);">トレーニングの実行</div>
<div class="tx" id="h3" style="left:1703.57px;top:159.10px;font-size:15.00px;line-height:15.00px;font-weight:400;color:#d9d9d9;transform:scaleX(0.7778);">左下エリアのボタンを使用して、実行中のトレーニング</div>
<div class="tx" id="h4" style="left:1701.89px;top:185.15px;font-size:15.00px;line-height:15.00px;font-weight:400;color:#d9d9d9;transform:scaleX(0.8455);">をいつでも一時停止および再開できます。</div>
<div class="tx" id="h5" style="left:1703.68px;top:225.95px;font-size:15.00px;line-height:15.00px;font-weight:400;color:#d9d9d9;transform:scaleX(0.7478);">実行中のトレーニングをキャンセルするには、[<i>トレーニン</i></div>
<div class="tx" id="h6" style="left:1702.10px;top:251.60px;font-size:15.00px;line-height:15.00px;font-weight:400;color:#d9d9d9;transform:scaleX(0.7602);"><i>グをリセット</i>] ボタンを押します。</div>
<div class="tx" id="h7" style="left:1702.82px;top:293.65px;font-size:15.00px;line-height:15.00px;font-weight:400;color:#d9d9d9;transform:scaleX(0.7410);">開始したトレーニングの設定は、トレーニングをリセットし</div>
<div class="tx" id="h8" style="left:1702.73px;top:320.25px;font-size:15.00px;line-height:15.00px;font-weight:400;color:#d9d9d9;transform:scaleX(0.8451);">ない限り変更できません。</div>
<div class="tx" id="h9" style="left:1732.46px;top:365.55px;font-size:14.00px;line-height:14.00px;font-weight:400;color:#d9d9d9;transform:scaleX(0.8249);">実行中のトレーニングをリセットすると、再開でき</div>
<div class="tx" id="h10" style="left:1731.67px;top:384.85px;font-size:14.00px;line-height:14.00px;font-weight:400;color:#d9d9d9;transform:scaleX(0.8186);">なくなります。</div>
<div class="tx" id="h11" style="left:1703.53px;top:444.65px;font-size:15.00px;line-height:15.00px;font-weight:700;color:#10a596;transform:scaleX(0.9239);">進行状況の監視</div>
<div class="tx" id="h12" style="left:1703.53px;top:495.25px;font-size:15.00px;line-height:15.00px;font-weight:700;color:#f0f0f0;transform:scaleX(0.9333);">損失</div>
<div class="tx" id="h13" style="left:1717.33px;top:531.30px;font-size:14.50px;line-height:14.50px;font-weight:400;color:#d9d9d9;transform:scaleX(0.7903);">トレーニングプロセスで最適化される関数です。ネッ</div>
<div class="tx" id="h14" style="left:1717.08px;top:557.75px;font-size:14.50px;line-height:14.50px;font-weight:400;color:#d9d9d9;transform:scaleX(0.8267);">トワークからの予測と既知の情報を比較して、偏</div>
<div class="tx" id="h15" style="left:1721.40px;top:583.55px;font-size:14.50px;line-height:14.50px;font-weight:400;color:#d9d9d9;transform:scaleX(0.7561);">差にペナルティを課します。この値はトレーニング中に</div>
<div class="tx" id="h16" style="left:1721.36px;top:609.60px;font-size:14.50px;line-height:14.50px;font-weight:400;color:#d9d9d9;transform:scaleX(0.8534);">減少します。</div>
<div class="tx" id="h17" style="left:1702.70px;top:660.85px;font-size:15.00px;line-height:15.00px;font-weight:700;color:#f0f0f0;transform:scaleX(0.8188);">F1 スコア検証</div>
<div class="tx" id="h18" style="left:1721.20px;top:695.88px;font-size:14.50px;line-height:14.50px;font-weight:400;color:#d9d9d9;transform:scaleX(0.8197);">精度と再現率の調和平均。この値はトレーニング</div>
<div class="tx" id="h19" style="left:1720.34px;top:722.35px;font-size:14.50px;line-height:14.50px;font-weight:400;color:#d9d9d9;transform:scaleX(0.8791);">中に増加し、最大値は 1 です。</div>
<div class="tx" id="h20" style="left:1748.68px;top:766.70px;font-size:14.00px;line-height:14.00px;font-weight:400;color:#d9d9d9;transform:scaleX(0.8707);">データは 2 番目のエポックが完了するまで表</div>
<div class="tx" id="h21" style="left:1749.67px;top:785.15px;font-size:14.00px;line-height:14.00px;font-weight:400;color:#d9d9d9;transform:scaleX(0.8740);">示されません。</div>
<div class="tx" id="h22" style="left:1703.51px;top:823.35px;font-size:14.50px;line-height:14.50px;font-weight:400;color:#cfcfcf;transform:scaleX(0.7950);text-decoration:underline;text-underline-offset:2px;">さらに参照する...</div>
<div class="tx" id="s1" style="left:1680.89px;top:1040.55px;font-size:13.50px;line-height:13.50px;font-weight:400;color:#d4d4d4;transform:scaleX(1.0081);">ラベル付き画像:</div>
<div class="tx" id="s2" style="left:1839.61px;top:1040.80px;font-size:15.00px;line-height:15.00px;font-weight:400;color:#e8f0ef;transform:scaleX(0.9737);">100%</div>
<div class="tx" style="left:788px;top:344.5px;font-size:15.5px;line-height:15.5px;color:#8c8c8c;transform:rotate(-90deg) scaleX(0.96);transform-origin:center">損失</div><div class="tx" style="left:770.5px;top:797.5px;font-size:14px;line-height:14px;color:#8c8c8c;transform:rotate(-90deg) scaleX(0.76);transform-origin:center">F1 スコア</div>
</body></html>
